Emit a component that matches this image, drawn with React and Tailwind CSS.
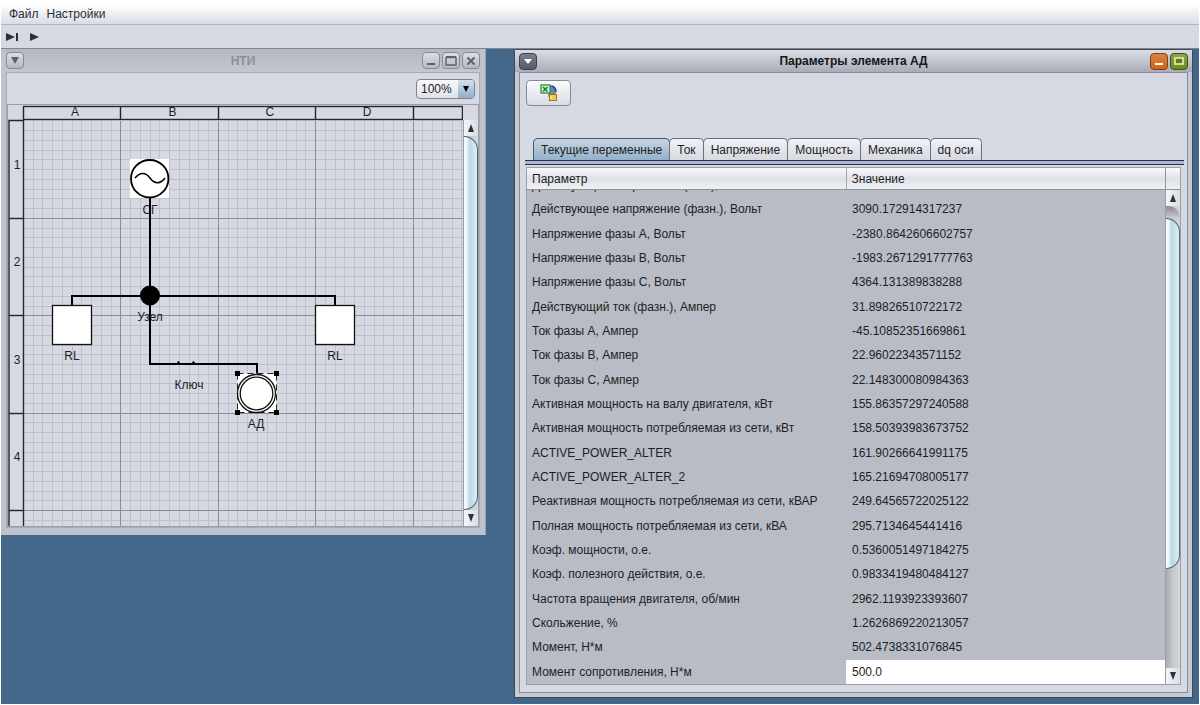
import { useState } from 'react';
import clsx from 'clsx';

const TABS = ['Текущие переменные', 'Ток', 'Напряжение', 'Мощность', 'Механика', 'dq оси'];

const ROWS = [
  ['Действующее напряжение (лин.), Вольт', ''],
  ['Действующее напряжение (фазн.), Вольт', '3090.172914317237'],
  ['Напряжение фазы A, Вольт', '-2380.8642606602757'],
  ['Напряжение фазы B, Вольт', '-1983.2671291777763'],
  ['Напряжение фазы C, Вольт', '4364.131389838288'],
  ['Действующий ток (фазн.), Ампер', '31.89826510722172'],
  ['Ток фазы A, Ампер', '-45.10852351669861'],
  ['Ток фазы B, Ампер', '22.96022343571152'],
  ['Ток фазы C, Ампер', '22.148300080984363'],
  ['Активная мощность на валу двигателя, кВт', '155.86357297240588'],
  ['Активная мощность потребляемая из сети, кВт', '158.50393983673752'],
  ['ACTIVE_POWER_ALTER', '161.90266641991175'],
  ['ACTIVE_POWER_ALTER_2', '165.21694708005177'],
  ['Реактивная мощность потребляемая из сети, кВАР', '249.64565722025122'],
  ['Полная мощность потребляемая из сети, кВА', '295.7134645441416'],
  ['Коэф. мощности, о.е.', '0.5360051497184275'],
  ['Коэф. полезного действия, о.е.', '0.9833419480484127'],
  ['Частота вращения двигателя, об/мин', '2962.1193923393607'],
  ['Скольжение, %', '1.2626869220213057'],
  ['Момент, Н*м', '502.4738331076845'],
];

// Sheet geometry
const CELL = 97.4;
const SHEET_W = 455;
const SHEET_H = 421;

const gridLines = (origin, limit) => {
  const lines = [];
  for (let i = 1; origin + (i * CELL) / 10 < limit; i++) {
    lines.push({ pos: Math.floor(origin + (i * CELL) / 10) + 0.5, major: i % 10 === 0 });
  }
  return lines;
};

const Sheet = () => {
  const cols = gridLines(15.5, SHEET_W - 1);
  const rows = gridLines(16, SHEET_H);

  return (
    <svg
      width={SHEET_W}
      height={SHEET_H}
      className="block bg-[#d6d9e1] font-['Liberation_Sans',sans-serif] text-[12px]"
      role="img"
      aria-label="Схема"
    >
      {/* Grid */}
      {[false, true].map((major) => (
        <g key={String(major)} stroke={major ? '#8a8e98' : '#bdc1ca'}>
          {cols.filter((l) => l.major === major).map((l) => (
            <line key={`c${l.pos}`} x1={l.pos} x2={l.pos} y1={16} y2={SHEET_H} />
          ))}
          {rows.filter((l) => l.major === major).map((l) => (
            <line key={`r${l.pos}`} x1={16} x2={SHEET_W} y1={l.pos} y2={l.pos} />
          ))}
        </g>
      ))}

      {/* Rulers */}
      <g fill="none" stroke="#23262e" strokeWidth="1.4">
        <rect x="15.5" y="1.5" width="439" height="13" />
        <path d="M1 421V15.5H15.5V421" />
        {cols.filter((l) => l.major).map((l) => (
          <line key={l.pos} x1={l.pos} x2={l.pos} y1={2} y2={15} />
        ))}
        {rows.filter((l) => l.major).map((l) => (
          <line key={l.pos} x1={1} x2={15} y1={l.pos} y2={l.pos} />
        ))}
      </g>
      <g fill="#1c1f26" textAnchor="middle">
        {['A', 'B', 'C', 'D'].map((name, i) => (
          <text key={name} x={67 + i * CELL} y="11">{name}</text>
        ))}
        {[1, 2, 3, 4].map((n, i) => (
          <text key={n} x="9" y={64 + i * CELL}>{n}</text>
        ))}
      </g>

      {/* Labels */}
      <g fill="#1c1f26" textAnchor="middle">
        <text x="142" y="109">СГ</text>
        <text x="142" y="216">Узел</text>
        <text x="64" y="255">RL</text>
        <text x="327" y="255">RL</text>
        <text x="181" y="284">Ключ</text>
        <text x="248" y="323">АД</text>
      </g>

      {/* Wires */}
      <g fill="none" stroke="#000" strokeWidth="2">
        <path d="M142 93V259H249V269" />
        <path d="M64 201V191H327V201" />
      </g>
      <circle cx="170.5" cy="257.5" r="1.2" />
      <circle cx="185.5" cy="257.5" r="1.2" />
      <circle cx="142" cy="190.5" r="10" />

      {/* Loads */}
      <rect x="44.5" y="200.5" width="39" height="39" fill="#fff" stroke="#111" strokeWidth="1.3" />
      <rect x="307.5" y="200.5" width="39" height="39" fill="#fff" stroke="#111" strokeWidth="1.3" />

      {/* Generator */}
      <rect x="122" y="54" width="39" height="39" fill="#fff" />
      <circle cx="141.7" cy="73.7" r="18.7" fill="#fff" stroke="#000" strokeWidth="1.8" />
      <path d="M127 73C132 67 137.5 67 142 73S152 79.5 157 73" fill="none" stroke="#000" strokeWidth="1.5" />

      {/* Motor, selected */}
      <rect x="229.5" y="268.5" width="39" height="39" fill="#fff" stroke="#222" strokeDasharray="6 4" />
      <circle cx="248.5" cy="288.5" r="19" fill="#fff" stroke="#111" strokeWidth="1.3" />
      <circle cx="248.5" cy="288.5" r="16.3" fill="#fff" stroke="#111" strokeWidth="1.3" />
      {[[227, 266], [266, 266], [227, 305], [266, 305]].map(([x, y]) => (
        <rect key={`${x}-${y}`} x={x} y={y} width="5" height="5" />
      ))}
    </svg>
  );
};

const ArrowButton = ({ up = false, label }) => (
  <button
    aria-label={label}
    className="flex h-4 w-full shrink-0 items-center justify-center bg-linear-to-r from-[#f4f5f8] to-[#d9dce3]"
  >
    <svg width="8" height="8" viewBox="0 0 8 8" fill="#2e3036">
      <path d={up ? 'M4 0L7 8H1Z' : 'M4 8L7 0H1Z'} />
    </svg>
  </button>
);

const ScrollBar = ({ children }) => (
  <div className="flex w-[15px] shrink-0 flex-col border-l border-[#9a9ea8] bg-[#c4c6cd]">
    <ArrowButton up label="Вверх" />
    <div className="flex min-h-0 flex-1 flex-col bg-linear-to-r from-[#a9abb1] via-[#c8cad0] to-[#d5d7dd]">
      {children}
    </div>
    <ArrowButton label="Вниз" />
  </div>
);

const THUMB =
  'rounded-r-[14px] border-y border-r border-[#4d6573] bg-linear-to-r from-[#f4fafd] from-15% via-[#bcd6e4] via-45% to-[#dcf1f8]';

const FrameButton = ({ label, className, children }) => (
  <button
    aria-label={label}
    className={clsx(
      'flex h-[17px] w-[18px] items-center justify-center rounded-[4px] border',
      className || 'border-[#858a96] bg-linear-to-b from-[#dcdfe6] to-[#b4b9c3] text-[#5c616b]'
    )}
  >
    {children}
  </button>
);

const ExportIcon = () => (
  <svg width="18" height="18" viewBox="0 0 18 18">
    <path d="M9 2H12L15 6V13H9Z" fill="#5b86cf" stroke="#2b4d96" />
    <path d="M12 2C15 3 16 5 16 8" fill="none" stroke="#244a9a" strokeWidth="1.5" />
    <rect x="1" y="1" width="9" height="8" fill="#d8f2d4" stroke="#2f8f3a" strokeWidth="1.3" />
    <path d="M3 3L7.5 7.5M7.5 3L3 7.5" stroke="#1c7a2a" strokeWidth="1.5" />
    <path d="M11 11V9.5C11 7.5 15 7.5 15 9.5V11" fill="none" stroke="#8d8a80" strokeWidth="1.3" />
    <rect x="9.5" y="10.5" width="7" height="6" fill="#f1c84b" stroke="#9b7a22" />
    <path d="M11 12V15" stroke="#fff3bd" />
  </svg>
);

const SchemeWindow = () => (
  <section className="flex shrink-0 flex-col border-r border-[#9ca1ad] bg-[#bfc3cd] px-[5px] pb-[7px]">
    <header className="flex h-[23px] items-center bg-linear-to-b from-[#b2b7c0] to-[#c3c7cf]">
      <FrameButton label="Меню окна">
        <svg width="8" height="7" viewBox="0 0 8 7" fill="currentColor"><path d="M0 0H8L4 7Z" /></svg>
      </FrameButton>
      <h2 className="flex-1 pl-10 text-center text-[12px] font-bold text-[#8c919b]">НТИ</h2>
      <div className="flex gap-[2px]">
        <FrameButton label="Свернуть">
          <svg width="10" height="10" viewBox="0 0 10 10"><path d="M1 8H9" stroke="currentColor" strokeWidth="2" /></svg>
        </FrameButton>
        <FrameButton label="Развернуть">
          <svg width="12" height="10" viewBox="0 0 12 10" fill="none" stroke="currentColor">
            <path d="M1 1.5H11V9H1Z" strokeWidth="1.4" /><path d="M1 1H11" strokeWidth="2" />
          </svg>
        </FrameButton>
        <FrameButton label="Закрыть">
          <svg width="10" height="10" viewBox="0 0 10 10"><path d="M1.5 1.5L8.5 8.5M8.5 1.5L1.5 8.5" stroke="currentColor" strokeWidth="2" /></svg>
        </FrameButton>
      </div>
    </header>

    <div className="border border-[#a6abb5] bg-[#d6d9e1]">
      <div className="flex h-[31px] items-center justify-end pr-1">
        <div className="relative">
          <select
            aria-label="Масштаб"
            defaultValue="100%"
            className="block h-5 w-[59px] appearance-none rounded-[4px] border border-[#7d828e] bg-linear-to-b from-[#f8f9fb] to-[#dfe2e8] pl-1 text-[12px] text-[#1c1f26]"
          >
            <option>50%</option>
            <option>100%</option>
            <option>200%</option>
          </select>
          <span className="pointer-events-none absolute inset-y-px right-px flex w-4 items-center justify-center rounded-r-[3px] bg-linear-to-b from-[#d3e0ec] to-[#8fb0c9]">
            <svg width="6" height="6" viewBox="0 0 6 6"><path d="M0 0H6L3 6Z" /></svg>
          </span>
        </div>
      </div>
      <div className="flex border border-[#9a9ea8]">
        <Sheet />
        <div className="grid pt-[15px]">
          <ScrollBar>
            <div className={clsx('flex-1', THUMB)} />
          </ScrollBar>
        </div>
      </div>
    </div>
  </section>
);

const ParametersTable = () => {
  const [torque, setTorque] = useState('500.0');

  return (
    <div className="flex min-h-0 flex-1 flex-col border border-[#9a9ea8] text-[12px] text-[#1c1f26]">
      <div className="flex h-[22px] shrink-0 border-b border-[#8d929c] bg-linear-to-b from-[#fafbfc] via-[#dfe1e7] to-[#eff0f3]">
        <table className="w-full table-fixed">
          <thead>
            <tr className="text-left">
              <th scope="col" className="h-[21px] border-r border-[#a5a9b2] px-[5px] py-0 font-normal">Параметр</th>
              <th scope="col" className="h-[21px] px-[5px] py-0 font-normal">Значение</th>
            </tr>
          </thead>
        </table>
        <div className="w-[15px] shrink-0 border-l border-[#8d929c]" />
      </div>

      <div className="flex min-h-0 flex-1">
        {/* Scrolled to the end, so the first row is cut by the header */}
        <div className="flex min-w-0 flex-1 items-end overflow-hidden bg-[#b8bcc4]">
          <table className="h-[511px] w-full shrink-0 table-fixed">
            <tbody>
              {ROWS.map(([name, value]) => (
                <tr key={name}>
                  <td className="truncate px-[5px] py-0">{name}</td>
                  <td className="px-[6px] py-0">{value}</td>
                </tr>
              ))}
              <tr>
                <td className="px-[5px] py-0">
                  <label htmlFor="torque">Момент сопротивления, Н*м</label>
                </td>
                <td className="bg-white p-0">
                  <input
                    id="torque"
                    value={torque}
                    onChange={(e) => setTorque(e.target.value)}
                    className="block w-full bg-white px-[6px] outline-none"
                  />
                </td>
              </tr>
            </tbody>
          </table>
        </div>
        <ScrollBar>
          <div className="h-3 shrink-0 rounded-tr-[12px] bg-linear-to-b from-[#8b8d93] to-[#c8cad0]" />
          <div className={clsx('h-[76%] shrink-0', THUMB)} />
        </ScrollBar>
      </div>
    </div>
  );
};

const ParametersWindow = () => {
  const [active, setActive] = useState(TABS[0]);

  return (
    <section className="flex min-w-0 flex-1 flex-col rounded-t-[3px] border border-[#3f4653] bg-[#c6cad3] px-1 pb-1">
      <header className="-mx-1 flex h-[22px] shrink-0 items-center bg-linear-to-b from-[#dcdee4] to-[#a8acb7] px-1">
        <FrameButton label="Меню окна" className="border-[#3c4150] bg-linear-to-b from-[#7a8090] to-[#555b6b] text-white">
          <svg width="8" height="5" viewBox="0 0 8 5" fill="currentColor"><path d="M0 0H8L4 5Z" /></svg>
        </FrameButton>
        <h2 className="flex-1 pl-5 text-center text-[12px] font-bold text-[#14161b]">Параметры элемента АД</h2>
        <div className="flex gap-[2px]">
          <FrameButton label="Свернуть" className="border-[#7c3f16] bg-linear-to-b from-[#d98442] to-[#cf6512] text-white">
            <svg width="8" height="10" viewBox="0 0 8 10"><path d="M0 8H8" stroke="currentColor" strokeWidth="2" /></svg>
          </FrameButton>
          <FrameButton label="Развернуть" className="border-[#3c5212] bg-linear-to-b from-[#8fa64e] to-[#6b8a1c] text-[#f0f8b8]">
            <svg width="10" height="8" viewBox="0 0 10 8"><path d="M1 1H9V7H1Z" fill="#5c7a17" stroke="currentColor" strokeWidth="1.5" /></svg>
          </FrameButton>
        </div>
      </header>

      <div className="flex min-h-0 flex-1 flex-col border border-[#868b98] bg-[#d6d9e1] pt-[7px] pr-[3px] pb-[7px] pl-[5px]">
        <div className="mb-8 px-px">
          <button
            aria-label="Экспорт в Excel"
            className="flex h-[26px] w-[45px] items-center justify-center rounded-[4px] border border-[#858a96] bg-linear-to-b from-[#fbfbfc] to-[#d9dce3]"
          >
            <ExportIcon />
          </button>
        </div>

        <div role="tablist" className="flex h-[22px] shrink-0 pl-2 text-[12px] text-[#1c1f26]">
          {TABS.map((tab) => (
            <button
              key={tab}
              role="tab"
              aria-selected={active === tab}
              onClick={() => setActive(tab)}
              className={clsx(
                '-mr-px rounded-t-[5px] border border-b-0 px-[7px] whitespace-nowrap',
                active === tab
                  ? 'border-[#3e5a74] bg-linear-to-b from-[#c8d6e3] to-[#93b0c8]'
                  : 'border-[#6a6f7b] bg-linear-to-b from-[#f1f2f5] to-[#d6d9e1]'
              )}
            >
              {tab}
            </button>
          ))}
        </div>
        <div className="mb-[2px] h-[5px] shrink-0 border-y border-[#27304a] bg-[#aab6cd]" />

        <div className="flex min-h-0 flex-1 flex-col pr-[3px] pl-px">
          <ParametersTable />
        </div>
      </div>
    </section>
  );
};

export default function App() {
  return (
    <div className="flex h-screen flex-col overflow-hidden bg-white px-px pb-px font-['Liberation_Sans',Arial,sans-serif]">
      <nav className="flex h-[25px] shrink-0 items-center gap-2 border-b border-[#b0b4bc] bg-linear-to-b from-white from-20% to-[#d9dce3] px-2 pt-1 text-[12px] text-[#2a2d33]">
        <button>Файл</button>
        <button>Настройки</button>
      </nav>
      <div className="flex h-6 shrink-0 items-center gap-3 border-b border-[#7f848e] bg-[#d6d9e1] px-[5px]">
        <button aria-label="Шаг">
          <svg width="12" height="8" viewBox="0 0 12 8" fill="#2b2d31"><path d="M0 0L9 4L0 8ZM10 0H12V8H10Z" /></svg>
        </button>
        <button aria-label="Пуск">
          <svg width="10" height="8" viewBox="0 0 10 8" fill="#2b2d31"><path d="M0 0L9 4L0 8Z" /></svg>
        </button>
      </div>

      <main className="flex min-h-0 flex-1 items-start gap-7 bg-[#426788] pr-[6px] pb-[6px]">
        <SchemeWindow />
        <div className="flex h-full min-w-0 flex-1">
          <ParametersWindow />
        </div>
      </main>
    </div>
  );
}
